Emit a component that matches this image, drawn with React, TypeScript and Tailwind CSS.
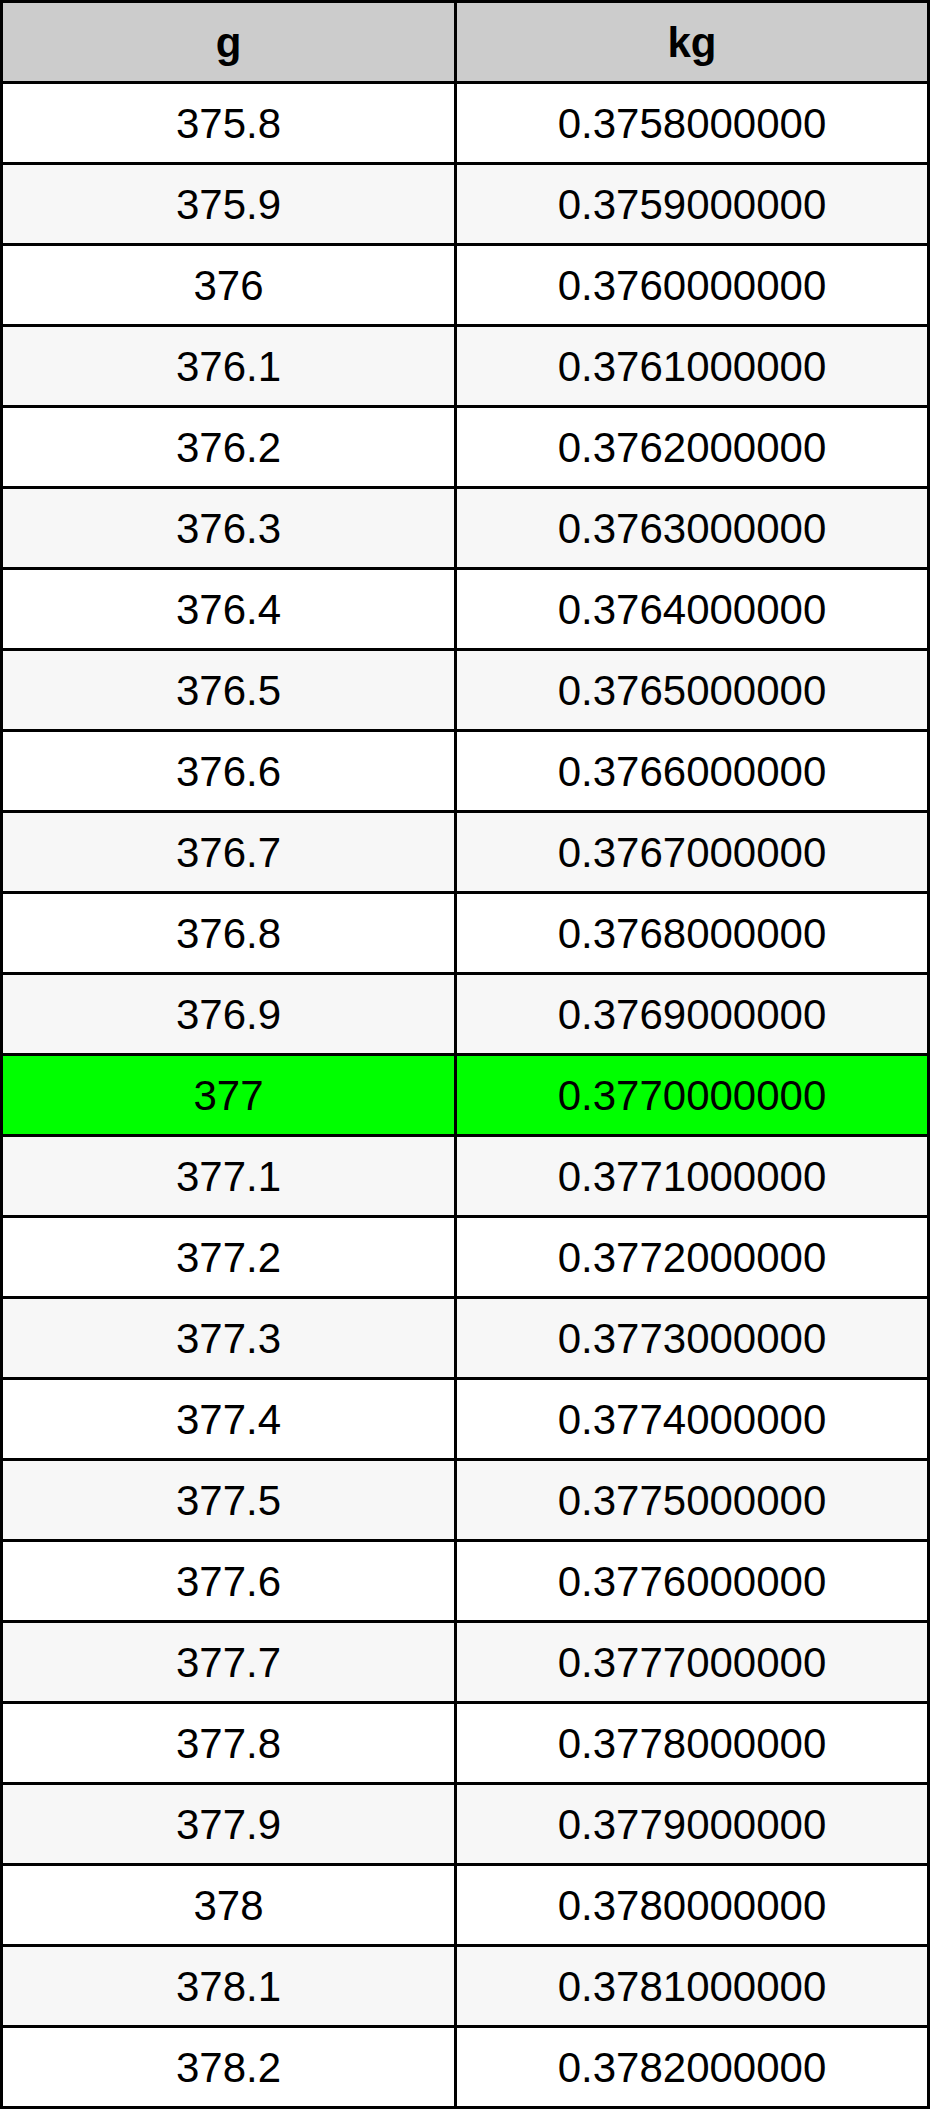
import React from "react";

const rows: string[][] = [];
for (let i = 0; i < 25; i++) {
  const tenths = 3758 + i;
  const g = (tenths / 10).toString();
  const kg = "0." + tenths.toString() + "000000";
  rows.push([g, kg]);
}

export default function App() {
  return (
    <div className="w-[930px] bg-white" style={{ fontFamily: '"Liberation Sans", Arial, sans-serif' }}>
      <div className="grid grid-cols-[454px_473px] border-l-[3px] border-t-[3px] border-black text-black text-[42px]">
        <div className="h-[81px] flex items-center justify-center bg-[#cccccc] border-r-[3px] border-b-[3px] border-black font-bold">g</div>
        <div className="h-[81px] flex items-center justify-center bg-[#cccccc] border-r-[3px] border-b-[3px] border-black font-bold">kg</div>
        {rows.map(([g, kg], i) => {
          const green = g === "377";
          const bg = green ? "bg-[#00ff00]" : i % 2 === 0 ? "bg-white" : "bg-[#f7f7f7]";
          return (
            <React.Fragment key={g}>
              <div className={`h-[81px] flex items-center justify-center border-r-[3px] border-b-[3px] border-black ${bg}`}>{g}</div>
              <div className={`h-[81px] flex items-center justify-center border-r-[3px] border-b-[3px] border-black ${bg}`}>{kg}</div>
            </React.Fragment>
          );
        })}
      </div>
    </div>
  );
}
